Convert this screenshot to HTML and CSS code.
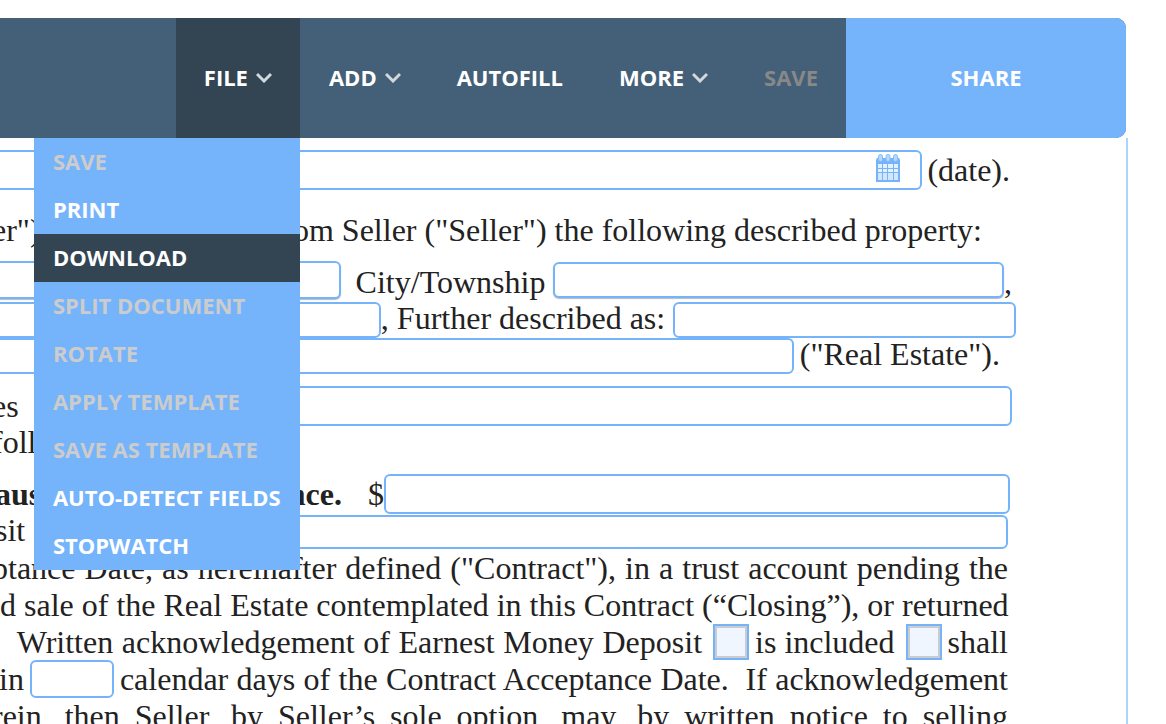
FILE: index.html
```html
<!DOCTYPE html>
<html lang="en">
<head>
<meta charset="utf-8">
<title>Document editor</title>
<link rel="stylesheet" href="styles.css">
</head>
<body>
<div class="app">
  <header class="toolbar">
    <nav class="nav" aria-label="Document actions">
      <div class="nav-group">
        <button class="nav-item is-open" type="button" aria-expanded="true">FILE
          <svg class="chevron" viewBox="0 0 16 12" aria-hidden="true"><path d="M1 3 8 10 15 3"/></svg>
        </button>
        <div class="menu">
          <button class="menu-item" type="button" disabled>SAVE</button>
          <button class="menu-item" type="button">PRINT</button>
          <button class="menu-item is-active" type="button">DOWNLOAD</button>
          <button class="menu-item" type="button" disabled>SPLIT DOCUMENT</button>
          <button class="menu-item" type="button" disabled>ROTATE</button>
          <button class="menu-item" type="button" disabled>APPLY TEMPLATE</button>
          <button class="menu-item" type="button" disabled>SAVE AS TEMPLATE</button>
          <button class="menu-item" type="button">AUTO-DETECT FIELDS</button>
          <button class="menu-item" type="button">STOPWATCH</button>
        </div>
      </div>
      <button class="nav-item" type="button">ADD
        <svg class="chevron" viewBox="0 0 16 12" aria-hidden="true"><path d="M1 3 8 10 15 3"/></svg>
      </button>
      <button class="nav-item" type="button">AUTOFILL</button>
      <button class="nav-item" type="button">MORE
        <svg class="chevron" viewBox="0 0 16 12" aria-hidden="true"><path d="M1 3 8 10 15 3"/></svg>
      </button>
      <button class="nav-item" type="button" disabled>SAVE</button>
    </nav>
    <button class="share" type="button">SHARE</button>
  </header>

  <main class="page">
    <section class="block block-date">
      <div class="line line-edge">
        <div class="date-field">
          <input class="field field-tall" type="text" aria-label="Date">
          <button class="calendar" type="button" aria-label="Pick a date">
            <svg viewBox="0 0 24 28" aria-hidden="true">
              <path fill="#75b4fb" d="M0 6 1 4h22l1 2v22H0z"/>
              <g fill="#b5d8fd" stroke="#83bcfb"><rect x="2.500" y="0.500" width="4" height="7" rx="2"/><rect x="10" y="0.500" width="4" height="7" rx="2"/><rect x="17.500" y="0.500" width="4" height="7" rx="2"/></g>
              <g fill="#e4f1ff"><path d="M2 10h4v4H2zM7 10h4v4H7zM12 10h5v4h-5zM18 10h4v4h-4zM2 15h4v3H2zM7 15h4v3H7zM12 15h5v3h-5zM18 15h4v3h-4z"/></g>
              <g fill="#d2e7fe"><path d="M2 19h4v7H2zM7 19h4v7H7zM12 19h5v7h-5zM18 19h4v7h-4z"/></g>
            </svg>
          </button>
        </div>
        <span class="after-date">(date).</span>
      </div>
    </section>

    <section class="block">
      <div class="line line-short">
        <span class="push">er")</span>
        <span>from Seller ("Seller") the following described property:</span>
      </div>
    </section>

    <section class="block">
      <div class="line line-out">
        <input class="field field-address field-high underlined" type="text" aria-label="Address">
        <label class="before-field gap-wide" for="city">City/Township</label>
        <input class="field field-city field-high underlined" id="city" type="text">
        <span>,</span>
      </div>
      <div class="line line-far">
        <input class="field field-county field-low" type="text" aria-label="County">
        <label class="before-field" for="described">, Further described as:</label>
        <input class="field field-described field-low" id="described" type="text">
      </div>
      <div class="line line-in">
        <input class="field field-low" type="text" aria-label="Legal description">
        <span class="after-field">("Real Estate").</span>
      </div>
    </section>

    <section class="block">
      <div class="line line-out">
        <span class="before-menu">es &nbsp;w</span>
        <input class="field field-tall" type="text" aria-label="Price">
      </div>
      <div class="line"><span>foll</span></div>
    </section>

    <section class="block block-last">
      <div class="line line-near line-edge">
        <label class="clause" for="deposit"><strong class="push">aus</strong><strong>ance.</strong><span class="dollar">$</span></label>
        <input class="field field-tall" id="deposit" type="text">
      </div>
      <div class="line line-near">
        <label class="before-menu" for="deposit-by">sit</label>
        <input class="field field-small field-low" id="deposit-by" type="text">
      </div>
    </section>

    <section class="body-text">
      <div class="line"><span class="justify">ptance Date, as hereinafter defined ("Contract"), in a trust account pending the</span></div>
      <div class="line line-full"><span class="justify">nd sale of the Real Estate contemplated in this Contract (“Closing”), or returned</span></div>
      <div class="line">
        <span class="justify">.&nbsp; Written acknowledgement of Earnest Money Deposit</span>
        <label class="option"><input class="check" type="checkbox">is included</label>
        <label class="option"><input class="check" type="checkbox">shall</label>
      </div>
      <div class="line line-flush">
        <label for="days">in</label>
        <input class="field field-days" id="days" type="text">
        <span class="justify">calendar days of the Contract Acceptance Date.&nbsp; If acknowledgement</span>
      </div>
      <div class="line"><span class="justify">rein, then Seller, by Seller’s sole option, may, by written notice to selling</span></div>
    </section>
  </main>
</div>
</body>
</html>
```

FILE: styles.css
```css
* {
  box-sizing: border-box;
}

body {
  margin: 0;
  background: #fff;
}

button,
input {
  margin: 0;
  font: inherit;
}

button {
  border: 0;
  padding: 0;
  background: none;
  color: inherit;
}

.app {
  display: flex;
  flex-direction: column;
  height: 100vh;
  padding-top: 18px;
  overflow: hidden;
}

/* Toolbar */

.toolbar {
  position: relative;
  z-index: 2;
  display: flex;
  flex: none;
  height: 120px;
  margin-right: 40px;
  border-radius: 0 10px 10px 0;
  background: #446078;
  color: #fff;
  font: bold 22px/30px "Open Sans", "Noto Sans", sans-serif;
}

.nav {
  display: flex;
  flex: 1;
  justify-content: flex-end;
}

.nav-group {
  position: relative;
  display: flex;
  margin-right: 1px;
}

.nav-item {
  display: flex;
  align-items: center;
  gap: 8px;
  padding: 0 28px 2px;
}

.nav-item.is-open {
  background: #334552;
}

.nav-item:disabled {
  color: #888;
}

.chevron {
  width: 16px;
  height: 12px;
  fill: none;
  stroke: #d3d8dc;
  stroke-width: 3;
}

.share {
  width: 280px;
  padding-bottom: 2px;
  border-radius: 0 10px 10px 0;
  background: #75b4fb;
}

.menu {
  position: absolute;
  top: 100%;
  right: 0;
  display: flex;
  flex-direction: column;
  width: 266px;
  background: #75b4fb;
}

.menu-item {
  height: 48px;
  padding: 0 19px 2px;
  text-align: left;
  white-space: nowrap;
}

.menu-item.is-active {
  background: #334552;
}

.menu-item:disabled {
  color: #ccc;
}

/* Document */

.page {
  flex: 1;
  min-height: 0;
  margin-right: 38px;
  padding: 14px 118px 0 0;
  overflow: hidden;
  border-right: 2px solid #add4fd;
  color: #222;
  font: 32px/36px "Liberation Serif", "Times New Roman", serif;
}

.block {
  margin-bottom: 16px;
}

.block-date {
  margin-bottom: 24px;
}

.block-last {
  margin-bottom: 1px;
}

.line {
  display: flex;
  align-items: center;
  height: 36px;
  margin-left: -8px;
  white-space: nowrap;
}

.body-text .line {
  height: 37px;
}

.line-out {
  margin-right: -4px;
}

.line-edge {
  margin-right: -2px;
}

.line-far {
  margin-right: -8px;
}

.line-in {
  margin-right: 8px;
}

.line-short {
  margin-right: 26px;
}

.line-near {
  margin-left: -5px;
}

.line-full {
  margin-left: -16px;
}

.line-flush {
  margin-left: -1px;
}

.push {
  flex: 1;
}

.justify {
  flex: 1;
  min-width: 0;
  text-align: justify;
  text-align-last: justify;
}

.field {
  flex: 1;
  min-width: 0;
  height: 36px;
  padding: 0 8px;
  border: 2px solid #75b4fb;
  border-radius: 6px;
  background: #fff;
  color: inherit;
}

.field-tall {
  height: 40px;
}

.field-small {
  height: 34px;
}

.field-high {
  margin-bottom: 4px;
}

.field-low {
  margin-top: 4px;
}

.underlined {
  box-shadow: 0 1px 1px #bbb;
}

.field-address {
  flex-basis: 348px;
  height: 38px;
}

.field-city {
  flex-basis: 450px;
}

.field-county {
  flex-basis: 388px;
}

.field-described {
  flex-basis: 342px;
}

.date-field {
  position: relative;
  display: flex;
  flex: 1;
}

.calendar {
  position: absolute;
  top: 4px;
  right: 22px;
  width: 24px;
  height: 28px;
}

.calendar svg {
  display: block;
}

.after-date {
  padding-left: 5px;
}

.after-field {
  padding-left: 6px;
}

.before-field {
  padding-right: 8px;
}

.gap-wide {
  padding-left: 15px;
}

.before-menu {
  min-width: 80px;
}

.clause {
  display: flex;
  width: 389px;
}

.dollar {
  padding-left: 26px;
}

.option {
  display: flex;
  align-items: center;
  gap: 6px;
  padding-left: 11px;
}

.check {
  width: 36px;
  height: 36px;
  appearance: none;
  border: 2px solid #75b4fb;
  background: #eff6ff;
  box-shadow: inset 0 0 0 2px #ccc;
}

.field-days {
  flex: 0 0 84px;
  height: 38px;
  margin: 0 6px;
}
```
